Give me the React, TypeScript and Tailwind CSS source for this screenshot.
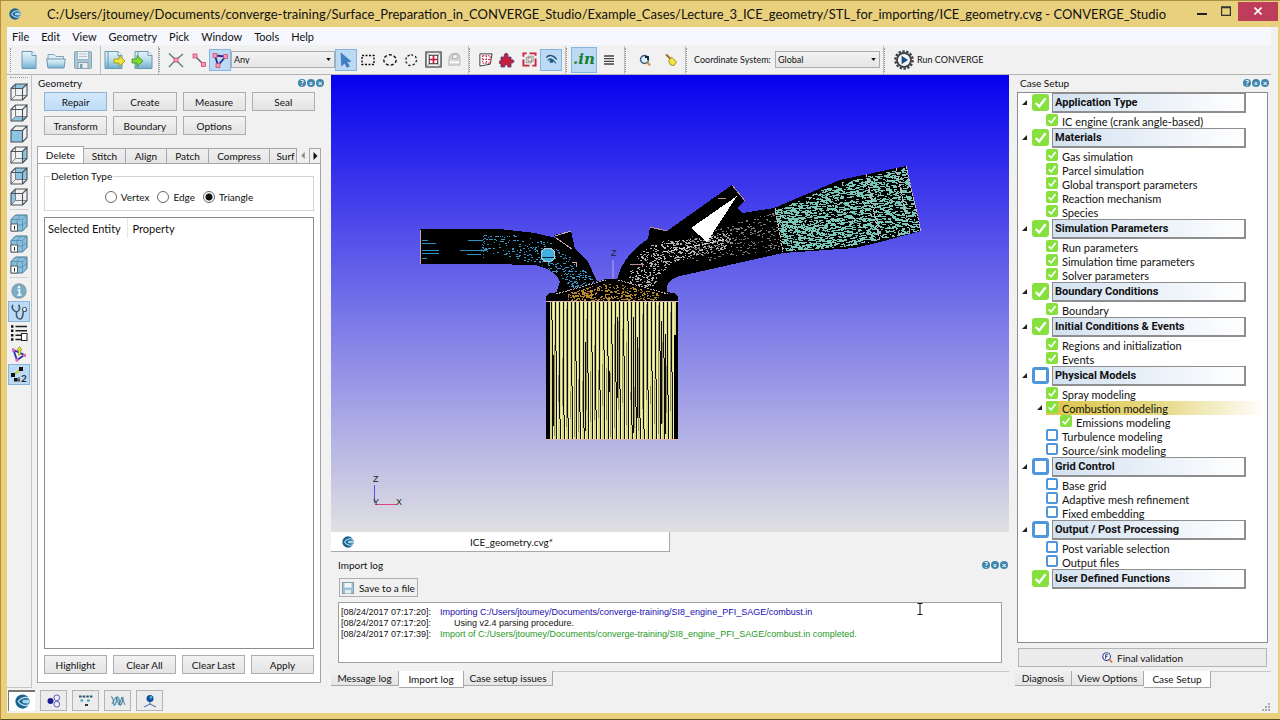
import { useId } from 'react';
import type { ReactNode } from 'react';
import { clsx } from 'clsx';

const menus = ['File', 'Edit', 'View', 'Geometry', 'Pick', 'Window', 'Tools', 'Help'];

const caseSetup = [
  { title: 'Application Type', done: true, items: [{ label: 'IC engine (crank angle-based)', done: true }] },
  {
    title: 'Materials',
    done: true,
    items: [
      { label: 'Gas simulation', done: true },
      { label: 'Parcel simulation', done: true },
      { label: 'Global transport parameters', done: true },
      { label: 'Reaction mechanism', done: true },
      { label: 'Species', done: true },
    ],
  },
  {
    title: 'Simulation Parameters',
    done: true,
    items: [
      { label: 'Run parameters', done: true },
      { label: 'Simulation time parameters', done: true },
      { label: 'Solver parameters', done: true },
    ],
  },
  { title: 'Boundary Conditions', done: true, items: [{ label: 'Boundary', done: true }] },
  {
    title: 'Initial Conditions & Events',
    done: true,
    items: [
      { label: 'Regions and initialization', done: true },
      { label: 'Events', done: true },
    ],
  },
  {
    title: 'Physical Models',
    done: false,
    items: [
      { label: 'Spray modeling', done: true },
      { label: 'Combustion modeling', done: true, selected: true },
      { label: 'Emissions modeling', done: true, nested: true },
      { label: 'Turbulence modeling', done: false },
      { label: 'Source/sink modeling', done: false },
    ],
  },
  {
    title: 'Grid Control',
    done: false,
    items: [
      { label: 'Base grid', done: false },
      { label: 'Adaptive mesh refinement', done: false },
      { label: 'Fixed embedding', done: false },
    ],
  },
  {
    title: 'Output / Post Processing',
    done: false,
    items: [
      { label: 'Post variable selection', done: false },
      { label: 'Output files', done: false },
    ],
  },
  { title: 'User Defined Functions', done: true, items: [] },
];

// ---------- small building blocks ----------

function PushButton({ children, active }: { children: ReactNode; active?: boolean }) {
  return (
    <button
      className={clsx(
        'flex h-[19px] items-center justify-center border text-[10px] leading-none',
        active
          ? 'border-[#8fb4d8] bg-linear-to-b from-[#d3e8fb] to-[#c0dcf6]'
          : 'border-[#adadad] bg-linear-to-b from-[#f2f2f2] to-[#e4e4e4]',
      )}
    >
      {children}
    </button>
  );
}

function Tab({ children, active, up, width }: { children: ReactNode; active?: boolean; up?: boolean; width: string }) {
  return (
    <button
      className={clsx(
        'shrink-0 overflow-hidden whitespace-nowrap border-[#a8a8a8] text-center text-[10px] leading-none',
        width,
        up ? 'border-r border-t' : 'border-b border-r',
        active && up && 'h-[17px] border-l bg-white',
        active && !up && 'h-[17px] bg-white',
        !active && 'h-[15px] bg-linear-to-b from-[#f0f0f0] to-[#e5e5e5]',
      )}
    >
      {children}
    </button>
  );
}

function PanelTitle({ children }: { children: ReactNode }) {
  return (
    <div className="flex h-4 items-center justify-between text-[10px] leading-none">
      <h2>{children}</h2>
      <div className="flex gap-px">
        {['?', '▫', '×'].map((mark) => (
          <button
            key={mark}
            className="flex size-2 items-center justify-center rounded-full bg-[#3f86ad] text-[8px] leading-none font-bold text-white"
          >
            {mark}
          </button>
        ))}
      </div>
    </div>
  );
}

function Status({ done, big, label }: { done: boolean; big?: boolean; label: string }) {
  return (
    <span className={clsx('grid shrink-0', big ? 'size-[17px]' : 'size-3')}>
      <input
        type="checkbox"
        aria-label={label}
        defaultChecked={done}
        className={clsx(
          'size-full appearance-none border-[#4f97dc] bg-white checked:border-[#86e03e] checked:bg-[#86e03e] [grid-area:1/1]',
          big ? 'rounded-[3px] border-3' : 'rounded-xs border-2',
        )}
      />
      {done && (
        <svg viewBox="0 0 16 16" className="pointer-events-none size-full [grid-area:1/1]">
          <path d="M3.5 8.5 L6.8 11.8 L12.8 4" fill="none" stroke="#fff" strokeWidth="2.2" />
        </svg>
      )}
    </span>
  );
}

function Expander() {
  return (
    <svg viewBox="0 0 6 6" className="size-[5px] shrink-0">
      <path d="M6 0 V6 H0 Z" fill="#222" />
    </svg>
  );
}

function Logo({ className }: { className: string }) {
  return (
    <svg viewBox="0 0 16 16" className={className}>
      <circle cx="8" cy="8" r="7.6" fill="#1d6391" />
      <path d="M14.8 4.6 C11 2.6 6 4 3.4 8 C6 12 11 13.4 14.8 11.4" fill="none" stroke="#bfe2f2" strokeWidth="1.4" />
      <path d="M15.4 6 L9 6.2 C7.4 6.6 7.4 9.4 9 9.8 L15.4 10 Z" fill="#a4d3ea" />
    </svg>
  );
}

// ---------- toolbar ----------

function Divider() {
  return <span className="h-7 w-1 shrink-0 border-r border-[#bdbdbd]" />;
}

function Grip() {
  return <span className="mr-1 h-6 w-px shrink-0 border-l border-dotted border-[#999]" />;
}

function Tool({ children, label, width, active }: { children: ReactNode; label: string; width: string; active?: boolean }) {
  return (
    <button
      aria-label={label}
      className={clsx(
        'flex h-[22px] shrink-0 items-center justify-center',
        width,
        active && 'border border-[#86b4dd] bg-[#bcdaf3]',
      )}
    >
      {children}
    </button>
  );
}

function PageShape({ x = 3 }: { x?: number }) {
  return (
    <>
      <path d={`M${x} 1.5 H${x + 10} L${x + 14} 5.5 V18.5 H${x} Z`} fill="url(#sky)" stroke="#6d98b0" />
      <path d={`M${x + 10} 1.5 V5.5 H${x + 14}`} fill="#fff" stroke="#6d98b0" />
    </>
  );
}

function SelectionTools() {
  return (
    <>
      <Tool label="Cursor" width="w-[22px]" active>
        <svg viewBox="0 0 16 16" className="size-4">
          <path d="M3 1 L13 9.5 L8.8 9.8 L11.4 14.2 L9 15.4 L6.8 11 L3.6 13.8 Z" fill="#3f80c8" stroke="#2f68ab" strokeWidth=".6" />
        </svg>
      </Tool>
      <Tool label="Rectangle" width="w-[22px]">
        <svg viewBox="0 0 16 16" className="size-4">
          <rect x="2" y="3.5" width="12" height="9" fill="none" stroke="#111" strokeWidth="1.4" strokeDasharray="2 1.5" />
        </svg>
      </Tool>
      <Tool label="Ellipse" width="w-[21px]">
        <svg viewBox="0 0 16 16" className="size-4">
          <ellipse cx="8" cy="8" rx="6.2" ry="5.2" fill="none" stroke="#111" strokeWidth="1.4" strokeDasharray="3 2" />
        </svg>
      </Tool>
      <Tool label="Lasso" width="w-[22px]">
        <svg viewBox="0 0 16 16" className="size-4">
          <path d="M8 2.5 L12.5 4.5 L14 8 L11 12.5 L6 13.5 L2.5 9.5 L3.5 4.5 Z" fill="none" stroke="#222" strokeWidth="1.3" strokeDasharray="2.4 2" />
        </svg>
      </Tool>
      <Tool label="Window select" width="w-[22px]">
        <svg viewBox="0 0 18 18" className="size-[17px]">
          <path d="M1 1 H17 V17 H1 Z" fill="none" stroke="#222" strokeWidth="1.2" />
          <path d="M1 1 L4.5 4.5 M17 1 L13.5 4.5 M1 17 L4.5 13.5 M17 17 L13.5 13.5" stroke="#888" strokeWidth=".8" />
          <rect x="4.5" y="4.5" width="9" height="9" fill="#fff" stroke="#222" />
          <path d="M9 5 V13 M5 9 H13" stroke="#d0103a" strokeWidth="1.8" />
        </svg>
      </Tool>
      <Tool label="Paint select" width="w-[21px]">
        <svg viewBox="0 0 16 16" className="size-[15px]">
          <path d="M2 14 V8 C2 4 4 2 6 1.5 H11 C13 2 14 4 14 8 V14 Z" fill="#d6d6d6" stroke="#bcbcbc" />
          <rect x="6" y="3" width="5" height="4" fill="#f4f4f4" stroke="#999" strokeWidth=".7" />
          <path d="M3 11 H13" stroke="#fff" strokeWidth="2" />
        </svg>
      </Tool>
    </>
  );
}

function Toolbar() {
  return (
    <div className="mr-[7px] flex h-[30px] items-center border-b border-[#b4b4b4] pl-[3px] text-[9px]">
      <Grip />
      <Tool label="New" width="w-[28px]">
        <svg viewBox="0 0 20 20" className="size-5">
          <defs>
            <linearGradient id="sky" x1="0" y1="0" x2="0" y2="1">
              <stop offset="0" stopColor="#e6f4fa" />
              <stop offset=".55" stopColor="#b4d9ea" />
              <stop offset="1" stopColor="#6fb0d2" />
            </linearGradient>
          </defs>
          <PageShape />
        </svg>
      </Tool>
      <Tool label="Open" width="w-[26px]">
        <svg viewBox="0 0 20 20" className="size-5">
          <path d="M2 17 V4.5 H8 L10 6.5 H17.5 V9" fill="#dfeef5" stroke="#7fa4b8" />
          <path d="M.7 9 H19.3 L18 18 H2 Z" fill="url(#sky)" stroke="#6d98b0" />
        </svg>
      </Tool>
      <Tool label="Save" width="w-[28px]">
        <svg viewBox="0 0 20 20" className="size-5">
          <rect x="1.5" y="1.5" width="17" height="17" rx="1.5" fill="#a9c7d6" stroke="#86a5b4" />
          <rect x="4.5" y="1.5" width="11" height="8" fill="#eef3f5" stroke="#9ab4c0" />
          <path d="M6 4 H14 M6 6.5 H14" stroke="#b5c3ca" />
          <rect x="5" y="12.5" width="10" height="6" fill="#e7ecef" stroke="#8aa4b1" />
          <rect x="7" y="14" width="2.5" height="4" fill="#7f9cab" />
        </svg>
      </Tool>
      <Divider />
      <Tool label="Export" width="w-[28px]">
        <svg viewBox="0 0 22 20" className="h-5 w-[22px]">
          <PageShape x={1} />
          <PageShape x={4} />
          <path d="M10 9 H15 V5.5 L21 11 L15 16.5 V13 H10 Z" fill="#f2e43a" stroke="#8f8a1c" strokeWidth=".8" />
        </svg>
      </Tool>
      <Tool label="Import" width="w-[26px]">
        <svg viewBox="0 0 22 20" className="h-5 w-[22px]">
          <PageShape x={4} />
          <PageShape x={7} />
          <path d="M1 9 H6 V5.5 L12 11 L6 16.5 V13 H1 Z" fill="#7bdc35" stroke="#3f8a1c" strokeWidth=".8" />
        </svg>
      </Tool>
      <Divider />
      <Grip />
      <Tool label="Pick vertex" width="w-[24px]">
        <svg viewBox="0 0 16 16" className="size-4">
          <path d="M1 1.5 Q7 7 15 15 M15 2 Q8 7 1 15" fill="none" stroke="#4d7f8c" strokeWidth="1.4" />
          <rect x="6" y="6" width="4" height="4" fill="#f59ab2" stroke="#d4476c" strokeWidth=".8" />
        </svg>
      </Tool>
      <Tool label="Pick edge" width="w-[21px]">
        <svg viewBox="0 0 16 16" className="size-4">
          <path d="M4 4 L13 13" stroke="#555" strokeWidth="1.2" />
          <rect x="2" y="2" width="4" height="4" fill="#f59ab2" stroke="#d4476c" strokeWidth=".8" />
          <rect x="10.5" y="10.5" width="4" height="4" fill="#f59ab2" stroke="#d4476c" strokeWidth=".8" />
        </svg>
      </Tool>
      <Tool label="Pick triangle" width="w-[22px]" active>
        <svg viewBox="0 0 16 16" className="size-4">
          <path d="M3 3.5 L13.5 4.5 L6 13.5 Z" fill="none" stroke="#1c2b9c" strokeWidth="1.8" />
          <path d="M1 1.5 h4 v4 h-4 z M11.5 2.5 h4 v4 h-4 z M4 11.5 h4 v4 h-4 z" fill="#f59ab2" stroke="#d4476c" strokeWidth=".8" />
        </svg>
      </Tool>
      <Select label="Pick filter" value="Any" width="w-[104px]" />
      <SelectionTools />
      <Divider />
      <Grip />
      <Tool label="Mesh" width="w-[22px]">
        <svg viewBox="0 0 16 16" className="size-[15px]">
          <path d="M2 15 V2 H15 L13 13 Z" fill="#fff" stroke="#333" />
          <path d="M5 4 H13 V12 H5 Z M5 8 H13 M9 4 V12" fill="none" stroke="#c2284b" strokeWidth="1.2" strokeDasharray="1.6 1.2" />
        </svg>
      </Tool>
      <Tool label="Puzzle" width="w-[22px]">
        <svg viewBox="0 0 16 16" className="size-4">
          <path d="M2 5 H5.4 C4 1 9 0 9 3 L8.6 5 H12 V8 C15 6.6 16.4 10.6 13 11 L12 10.8 V15 H8.8 C9.4 12 5.4 12 5.6 15 H2 V11.5 C-1 12 -1 8.4 2 9 Z" fill="#c41f3c" stroke="#4b3a78" strokeWidth=".8" />
        </svg>
      </Tool>
      <Tool label="Box select" width="w-[22px]">
        <svg viewBox="0 0 16 16" className="size-[15px]">
          <path d="M1.5 5 V1.5 H5 M8 1.5 H14.5 V4 M14.5 7 V14.5 H11 M8 14.5 H1.5 V8" fill="none" stroke="#cc2244" strokeWidth="2" />
          <path d="M4.5 6 H10 V11.5 H4.5 Z M6.5 4.5 H12 V10 H6.5 Z" fill="none" stroke="#8a8a8a" strokeWidth=".9" />
        </svg>
      </Tool>
      <Tool label="Visibility" width="w-[22px]" active>
        <svg viewBox="0 0 16 16" className="size-[15px]">
          <path d="M2.5 6 C5 2.5 10.5 3 13.5 8" fill="none" stroke="#1e4d78" strokeWidth="1.4" />
          <path d="M4 9 C6 6.5 9 6.5 12.5 12" fill="none" stroke="#1e4d78" strokeWidth="1.2" />
          <circle cx="8" cy="9.5" r="2.2" fill="#1e5d92" />
        </svg>
      </Tool>
      <Divider />
      <Grip />
      <button className="flex h-[26px] w-[26px] items-center justify-center border border-[#86b4dd] bg-[#bcdaf3] font-['DejaVu_Serif','Liberation_Serif',serif] text-[15px] leading-none font-bold text-[#17802a] italic">
        .in
      </button>
      <Tool label="Lines" width="w-[24px]">
        <svg viewBox="0 0 10 10" className="size-[10px]">
          <path d="M0 1 H10 M0 3.7 H10 M0 6.3 H10 M0 9 H10" stroke="#444" strokeWidth="1.3" />
        </svg>
      </Tool>
      <Divider />
      <Grip />
      <Tool label="Find" width="w-[30px]">
        <svg viewBox="0 0 12 12" className="size-3">
          <circle cx="5.5" cy="5.5" r="4" fill="#dcebf6" stroke="#3d5d80" strokeWidth="1.4" />
          <path d="M6 3 H9 V6" fill="none" stroke="#0d2740" strokeWidth="1.8" />
          <path d="M8.5 8.5 L11 11.5" stroke="#e08a3a" strokeWidth="2" />
        </svg>
      </Tool>
      <Tool label="Sweep" width="w-[22px]">
        <svg viewBox="0 0 12 12" className="size-3">
          <path d="M1 .5 L5.5 4.8" stroke="#a56c1c" strokeWidth="2" />
          <path d="M3.5 6.5 L7 3.5 L11.5 8 L9 11.5 L5.5 11 Z" fill="#f5e53c" stroke="#8d7a16" strokeWidth=".8" />
        </svg>
      </Tool>
      <Divider />
      <Grip />
      <label htmlFor="coords" className="w-[84px] pl-[3px] whitespace-nowrap">
        Coordinate System:
      </label>
      <Select id="coords" label="Coordinate System" value="Global" width="w-[105px]" />
      <Divider />
      <Grip />
      <button className="ml-[5px] flex items-center gap-[3px]">
        <svg viewBox="0 0 20 20" className="size-5">
          <circle cx="10" cy="10" r="8.6" fill="none" stroke="#3f4347" strokeWidth="2.4" strokeDasharray="2.4 1.46" />
          <circle cx="10" cy="10" r="7" fill="#f4f6f8" stroke="#3f4347" strokeWidth="1.8" />
          <path d="M7.6 5.8 L14 10 L7.6 14.2 Z" fill="#1c4f8a" />
        </svg>
        Run CONVERGE
      </button>
    </div>
  );
}

function Select({ id, label, value, width }: { id?: string; label: string; value: string; width: string }) {
  return (
    <span className={clsx('grid h-[17px] shrink-0 items-center', width)}>
      <select
        id={id}
        aria-label={label}
        className="size-full appearance-none border border-[#adadad] bg-linear-to-b from-[#f2f2f2] to-[#e6e6e6] pl-[2px] leading-none [grid-area:1/1]"
      >
        <option>{value}</option>
      </select>
      <svg viewBox="0 0 6 4" className="pointer-events-none mr-1 h-[3px] w-[5px] justify-self-end [grid-area:1/1]">
        <path d="M0 0 H6 L3 4 Z" fill="#111" />
      </svg>
    </span>
  );
}

// ---------- left icon strip ----------

const faces: Record<string, string> = {
  top: 'M1 5.5 L5.5 1 H17 L12.5 5.5 Z',
  bottom: 'M1 17 L5.5 12.5 H17 L12.5 17 Z',
  front: 'M1 5.5 H12.5 V17 H1 Z',
  right: 'M12.5 5.5 L17 1 V12.5 L12.5 17 Z',
  back: 'M5.5 1 H17 V12.5 H5.5 Z',
  left: 'M1 5.5 L5.5 1 V12.5 L1 17 Z',
};

function Cube({ face }: { face: string }) {
  return (
    <svg viewBox="0 0 18 18" className="size-[18px]">
      <path d={faces[face]} fill="#8cc4e2" />
      {face !== 'front' && <path d="M5.5 1 V12.5 H17 M5.5 12.5 L1 17" fill="none" stroke="#6c747c" strokeWidth=".9" />}
      <path d="M1 5.5 H12.5 V17 H1 Z M1 5.5 L5.5 1 H17 L12.5 5.5 M17 1 V12.5 L12.5 17" fill="none" stroke="#4c5259" strokeWidth="1.1" />
    </svg>
  );
}

function SolidCube() {
  return (
    <svg viewBox="0 0 18 18" className="size-[18px]">
      <path d="M1 5.5 L5.5 1 H17 V12.5 L12.5 17 H1 Z" fill="#86c0de" stroke="#42728c" />
      <path d="M1 5.5 H12.5 V17 M12.5 5.5 L17 1 M7 5.5 V17 M1 11 H12.5 L17 7 M7 5.5 L11 1" fill="none" stroke="#5a8ba5" strokeWidth=".8" />
      <rect x="1" y="10" width="6.5" height="7" fill="#fff" stroke="#444" strokeWidth=".8" />
      <path d="M4.5 12 V15.5" stroke="#222" />
    </svg>
  );
}

function IconStrip() {
  return (
    <aside className="flex w-[25px] shrink-0 flex-col items-center border-r border-b border-[#c4c4c4] pt-[2px]">
      <span className="mb-[3px] w-[18px] border-t border-dotted border-[#999]" />
      {Object.keys(faces).map((face) => (
        <Strip key={face} label={face}>
          <Cube face={face} />
        </Strip>
      ))}
      <span className="my-[2px] w-[18px] border-t border-[#d0d0d0]" />
      {['view 1', 'view 2', 'view 3'].map((view) => (
        <Strip key={view} label={view}>
          <SolidCube />
        </Strip>
      ))}
      <span className="my-[2px] w-[18px] border-t border-[#d0d0d0]" />
      <Strip label="Information">
        <svg viewBox="0 0 16 16" className="size-4">
          <circle cx="8" cy="8" r="7" fill="#76afcb" stroke="#8d9fa8" strokeWidth="1.4" />
          <path d="M6.5 7 H8.5 V12 M6.3 12 H10.5" fill="none" stroke="#fff" strokeWidth="1.6" />
          <circle cx="8" cy="4.2" r="1.2" fill="#fff" />
        </svg>
      </Strip>
      <Strip label="Diagnosis" active>
        <svg viewBox="0 0 18 18" className="size-[18px]">
          <path d="M3 2 C1 4 3 8 6.5 9 C10 8 10 4 8.6 1.6 M6.5 9 C6 13 7 16 10 16 C14 16 12 10 14 8" fill="none" stroke="#44596e" strokeWidth="1.6" />
          <circle cx="14.5" cy="6.5" r="2" fill="#fff" stroke="#44596e" strokeWidth="1.2" />
        </svg>
      </Strip>
      <Strip label="List">
        <svg viewBox="0 0 18 18" className="size-[18px]">
          <path d="M1 2.5 H4 M1 6.8 H4 M1 11.2 H4 M1 15.5 H4" stroke="#111" strokeWidth="2.6" strokeDasharray="2.4 1" />
          <path d="M5.5 2.5 H17 M5.5 6.8 H17 M5.5 11.2 H11 M5.5 15.5 H11" stroke="#222" strokeWidth="1.4" />
          <rect x="11.5" y="9.5" width="5.5" height="7" fill="#fff" stroke="#222" />
        </svg>
      </Strip>
      <Strip label="Normals">
        <svg viewBox="0 0 16 16" className="size-4">
          <path d="M2.5 4 L13.5 9 L6 14 Z" fill="none" stroke="#2430b0" strokeWidth="1.8" />
          <path d="M7.5 9 V4 H6 L8.5 .5 L11 4 H9.5 V9 Z" fill="#f2e43a" stroke="#8f8a1c" strokeWidth=".7" />
          <path d="M1 2.5 h3 v3 h-3 z M12 8 h3 v3 h-3 z M4.5 12.5 h3 v3 h-3 z" fill="#e36ab0" />
        </svg>
      </Strip>
      <Strip label="Vertex ids" active>
        <svg viewBox="0 0 18 18" className="size-[18px]">
          <path d="M3 9 L11 3" stroke="#c9c726" strokeWidth="2" />
          <path d="M1 7 h4 v4 h-4 z M9 1 h4 v4 h-4 z M4 12 h3.5 v3.5 h-3.5 z" fill="#111" />
          <path d="M7 14 H10 M9 11 V16" stroke="#333" />
          <text x="11" y="16" fontSize="10" fontWeight="700" fill="#1d2c3c">
            2
          </text>
        </svg>
      </Strip>
    </aside>
  );
}

function Strip({ children, label, active }: { children: ReactNode; label: string; active?: boolean }) {
  return (
    <button
      aria-label={label}
      className={clsx(
        'flex h-[21px] w-[22px] shrink-0 items-center justify-center',
        active && 'border border-[#86b4dd] bg-[#bcdaf3]',
      )}
    >
      {children}
    </button>
  );
}

// ---------- geometry panel ----------

function GeometryPanel() {
  return (
    <section className="flex w-[287px] shrink-0 flex-col pb-[5px]">
      <div className="pl-px">
        <PanelTitle>Geometry</PanelTitle>
      </div>
      <div className="mt-px grid grid-cols-4 gap-x-[6px] gap-y-[5px] pr-[9px] pl-[7px]">
        <PushButton active>Repair</PushButton>
        <PushButton>Create</PushButton>
        <PushButton>Measure</PushButton>
        <PushButton>Seal</PushButton>
        <PushButton>Transform</PushButton>
        <PushButton>Boundary</PushButton>
        <PushButton>Options</PushButton>
      </div>
      <div className="mt-[11px] mr-[3px] flex items-end">
        <Tab up active width="w-[47px]">Delete</Tab>
        <Tab up width="w-[42px]">Stitch</Tab>
        <Tab up width="w-[41px]">Align</Tab>
        <Tab up width="w-[42px]">Patch</Tab>
        <Tab up width="w-[61px]">Compress</Tab>
        <Tab up width="w-[27px]">&nbsp;&nbsp;Surf</Tab>
        <button aria-label="Scroll tabs left" className="flex h-[15px] w-3 items-center justify-center bg-[#f0f0f0]">
          <svg viewBox="0 0 4 8" className="h-[7px] w-1">
            <path d="M4 0 V8 L0 4 Z" fill="#888" />
          </svg>
        </button>
        <button aria-label="Scroll tabs right" className="flex h-[15px] w-3 items-center justify-center border border-b-0 border-[#a8a8a8] bg-[#f0f0f0]">
          <svg viewBox="0 0 4 8" className="h-2 w-[5px]">
            <path d="M0 0 V8 L4 4 Z" fill="#111" />
          </svg>
        </button>
      </div>
      <div className="mr-[3px] flex flex-1 flex-col border border-[#a4a4a4] bg-white px-[6px] pt-[7px] pb-2">
        <fieldset className="flex h-10 items-start justify-center gap-2 border border-[#d4d4d4] pt-[10px] text-[10px] leading-none">
          <legend className="ml-[5px] px-px">Deletion Type</legend>
          {['Vertex', 'Edge', 'Triangle'].map((kind) => (
            <label key={kind} className="flex items-center gap-1">
              <input
                type="radio"
                name="deletion"
                defaultChecked={kind === 'Triangle'}
                className="size-3 appearance-none rounded-full border border-[#666] bg-white checked:bg-[radial-gradient(circle,#111_3px,transparent_4px)]"
              />
              {kind}
            </label>
          ))}
        </fieldset>
        <div className="mt-[6px] flex-1 border border-[#8c8c8c]">
          <table className="w-full table-fixed text-left text-[11px] leading-none">
            <thead>
              <tr className="h-[20px]">
                <th className="w-[82px] border-r border-[#e8e8e8] pl-[3px] font-normal whitespace-nowrap">Selected Entity</th>
                <th className="pl-[5px] font-normal">Property</th>
              </tr>
            </thead>
          </table>
        </div>
        <div className="mt-[6px] grid grid-cols-4 gap-[6px]">
          <PushButton>Highlight</PushButton>
          <PushButton>Clear All</PushButton>
          <PushButton>Clear Last</PushButton>
          <PushButton>Apply</PushButton>
        </div>
      </div>
    </section>
  );
}

// ---------- 3D viewport ----------

// small deterministic generator, so the mesh looks the same on every load
function makeRandom(seed: number) {
  let s = seed;
  return () => {
    s = (s * 16807) % 2147483647;
    return s / 2147483647;
  };
}

// dashes scattered along a centre line, given as [x, y, half width] stations
function scatter(seed: number, count: number, line: number[][], dash: number) {
  const rnd = makeRandom(seed);
  let d = '';
  for (let i = 0; i < count; i++) {
    const t = rnd() * (line.length - 1);
    const k = Math.floor(t);
    const f = t - k;
    const [x0, y0, w0] = line[k];
    const [x1, y1, w1] = line[k + 1];
    const dx = x1 - x0;
    const dy = y1 - y0;
    const len = Math.hypot(dx, dy);
    const off = (rnd() * 2 - 1) * (w0 + (w1 - w0) * f);
    const x = Math.round(x0 + dx * f - (dy / len) * off);
    const y = Math.round(y0 + dy * f + (dx / len) * off);
    d += `M${x} ${y}.5h${1 + Math.floor(rnd() * dash)}`;
  }
  return d;
}

function cylinderLines() {
  const rnd = makeRandom(91);
  let dark = '';
  let olive = '';
  let light = '';
  for (let x = 551; x < 674; x += 4) {
    const split = Math.round(320 + rnd() * 110);
    dark += `M${x}.5 302V${split}M${x + 1}.5 ${split}V439`;
    if (rnd() > 0.8) dark += `M${x + 2}.5 ${Math.round(302 + rnd() * 70)}V${Math.round(390 + rnd() * 49)}`;
    olive += `M${x + 3}.5 ${Math.round(302 + rnd() * 90)}V${Math.round(400 + rnd() * 39)}`;
    light += `M${x + 2}.5 302V439`;
  }
  return { dark, olive, light };
}

const cylinder = cylinderLines();
const leftBlue = scatter(7, 330, [[482, 242, 8], [520, 247, 12], [548, 255, 12], [572, 272, 11], [584, 288, 12]], 2);
const rightWhite = scatter(21, 520, [[640, 290, 12], [645, 268, 15], [662, 253, 13], [690, 248, 9], [730, 240, 8]], 2);
const rightGrey = scatter(33, 300, [[690, 250, 13], [740, 238, 16], [779, 230, 19]], 2);
const outletTeal = scatter(45, 2300, [[779, 231, 21], [845, 214, 32], [912, 199, 32]], 4);
const headGold = scatter(57, 340, [[568, 297, 4], [608, 291, 9], [658, 297, 4]], 2);

function EngineView() {
  const id = useId();
  return (
    <svg viewBox="331 75 678 457" preserveAspectRatio="xMidYMid meet" className="size-full" shapeRendering="crispEdges">
      <title>Engine geometry</title>
      <clipPath id={id}>
        <path d="M774 208 L840 180 L906 166 L921 231 L880 242 L855 248 L783 253 Z" />
      </clipPath>
      {/* intake */}
      <path d="M420 229 H500 L535 233 L556 238 L554 235 L571 231 L575 249 L588 262 L597 281 L560 296 L557 291 L560 282 Q556 270 535 265 L488 264 H420 Z" />
      <path d="M422 240h6M422 243h14M422 250h17M422 253h17M422 258h5M468 240h15M460 250h27M467 254h14" stroke="#2f8fc0" />
      <path d={leftBlue} stroke="#3796c4" />
      <path d="M483.500 236V260" stroke="#2f8fc0" strokeDasharray="1 2" />
      <circle cx="548" cy="255" r="7" fill="#41aee0" stroke="#b9c9d0" />
      <path d="M542 257H554" stroke="#123" />
      <path d="M420.500 230V264M555 236L571 231M556 238L572 249M572 262h4v5" fill="none" stroke="#c9a9ae" />
      {/* exhaust */}
      <path d="M617 280 Q622 256 648 239 L650 227 L667 231 L732 185 L745 201 L737 208 L743 213 L774 208 L840 180 L906 166 L921 231 L880 242 L855 248 L783 253 L680 276 Q664 280 667 295 Z" />
      <path d={rightWhite} stroke="#b4b4b4" />
      <path d={rightGrey} stroke="#7a7a7a" />
      <path d="M663 252 L695 246 L727 239" fill="none" stroke="#d8d8d8" strokeDasharray="6 2" />
      <g clipPath={`url(#${id})`}>
        <path d={outletTeal} stroke="#79c9bb" />
      </g>
      <path d="M737 196 L691 228 L707 242 Z" fill="#fff" />
      <path d="M775 208L783 252M866 174L880 241M896 168L910 233M906 166L921 231" stroke="#d9b8bd" strokeDasharray="3 1" />
      <path d="M650 227L667 231M732 185L745 201M718 198h8M630 264h12v3" fill="none" stroke="#b89096" />
      {/* cylinder head */}
      <path d="M546 302 V297 L549 293 L560 292 L606 279 H618 L664 292 L675 293 L678 297 V302 Z" />
      <path d={headGold} stroke="#b8892a" />
      <path d="M556 294L606 280M618 280L668 294" stroke="#c9a9ae" strokeDasharray="2 1" />
      {/* cylinder */}
      <rect x="546" y="301" width="132" height="139" fill="#d6d78d" />
      <path d={cylinder.light} stroke="#f6f8a4" />
      <path d={cylinder.olive} stroke="#8f9068" />
      <path d={cylinder.dark} stroke="#0c0c08" />
      <path d="M546 301 h4 v139 h-4 z M674 335 h4 v105 h-4 z M676 301 h2 v40 h-2 z" />
      <path d="M546 301.500H678M546 439.500H678" stroke="#dfb6bd" />
      {/* axes */}
      <path d="M612.500 260V279" stroke="#8f84e6" strokeWidth="2" />
      <path d="M374.500 485V503" stroke="#5b4be0" />
      <path d="M375 504.500H397" stroke="#e0457a" />
      <g fontSize="9" fill="#222" fontFamily="Liberation Sans, sans-serif">
        <text x="611" y="256">Z</text>
        <text x="373" y="482">Z</text>
        <text x="373" y="505">Y</text>
        <text x="396" y="505">X</text>
      </g>
    </svg>
  );
}

// ---------- log ----------

const logLines = [
  {
    time: '[08/24/2017 07:17:20]:',
    text: 'Importing C:/Users/jtoumey/Documents/converge-training/SI8_engine_PFI_SAGE/combust.in',
    color: 'text-[#1a0ab0]',
  },
  { time: '[08/24/2017 07:17:20]:', text: 'Using v2.4 parsing procedure.', color: 'pl-[14px]' },
  {
    time: '[08/24/2017 07:17:39]:',
    text: 'Import of C:/Users/jtoumey/Documents/converge-training/SI8_engine_PFI_SAGE/combust.in completed.',
    color: 'text-[#1f9a1f]',
  },
];

function LogPanel() {
  return (
    <section className="flex flex-col">
      <div className="pt-[5px] pr-px pl-[7px]">
        <PanelTitle>Import log</PanelTitle>
      </div>
      <div className="px-[7px]">
        <button className="mt-[5px] ml-px flex h-[19px] items-center gap-[5px] border border-[#adadad] bg-[#f0f0f0] px-[2px] text-[10px] leading-none">
          <svg viewBox="0 0 12 12" className="size-3">
            <rect x=".5" y=".5" width="11" height="11" fill="#9cc3d6" stroke="#7b9dad" />
            <rect x="2.500" y="1" width="7" height="4.500" fill="#f2f6f8" />
            <rect x="3" y="8" width="6" height="3.500" fill="#e7ecef" />
          </svg>
          Save to a file
        </button>
        <div className="relative mt-[5px] h-[61px] border border-[#a0a0a0] bg-white px-[2px] pt-1 font-['Liberation_Sans',sans-serif] text-[9px] leading-[11px]">
          {logLines.map((line) => (
            <p key={line.text} className="flex">
              <span className="w-[99px] shrink-0">{line.time}</span>
              <span className={line.color}>{line.text}</span>
            </p>
          ))}
          <svg viewBox="0 0 6 12" className="absolute top-0 right-[78px] h-3 w-[6px]">
            <path d="M.5 .5 H5.500 M3 .5 V11.500 M.5 11.500 H5.500" stroke="#111" />
          </svg>
        </div>
      </div>
      <div className="mt-2 flex h-[17px] items-start">
        <Tab width="w-[68px]">Message log</Tab>
        <Tab width="w-[65px]" active>Import log</Tab>
        <Tab width="w-[89px]">Case setup issues</Tab>
        <span className="flex-1 border-t border-[#c8c8c8]" />
      </div>
    </section>
  );
}

// ---------- case setup ----------

function CaseSetup() {
  return (
    <section className="flex w-[257px] shrink-0 flex-col">
      <div className="pr-[2px] pl-[6px]">
        <PanelTitle>Case Setup</PanelTitle>
      </div>
      <div className="mx-[3px] mt-px flex-1 border border-[#8c8c8c] bg-white pl-1">
        {caseSetup.map((group) => (
          <div key={group.title}>
            {/* relative, so that the bar covers descenders of the row above */}
            <div className="relative flex h-[21px] items-start">
              <span className="w-[10px] pt-[7px]">{group.items.length > 0 && <Expander />}</span>
              <span className="pt-px">
                <Status done={group.done} big label={group.title} />
              </span>
              <h3 className="ml-[3px] flex h-5 w-[194px] items-center border border-r-2 border-b-2 border-[#8e8e8e] bg-linear-to-r from-[#d3e1f0] to-white pl-[2px] font-[Roboto,sans-serif] text-[11px] leading-none font-bold">
                {group.title}
              </h3>
            </div>
            {group.items.map((item) => (
              <div key={item.label} className="flex h-[14px] items-start">
                <span className={clsx('flex shrink-0 justify-end pt-1 pr-1', item.nested ? 'w-[38px]' : 'w-6')}>
                  {item.selected && <Expander />}
                </span>
                <span
                  className={clsx(
                    'flex h-[14px] flex-1 items-start gap-1',
                    item.selected && 'bg-linear-to-r from-[#dcc54a] via-[#e6d880] to-white',
                  )}
                >
                  <Status done={item.done} label={item.label} />
                  <span className="text-[11px] leading-4 whitespace-nowrap">{item.label}</span>
                </span>
              </div>
            ))}
          </div>
        ))}
      </div>
      <button className="mt-[5px] mr-1 ml-1 flex h-[19px] items-center justify-center gap-1 border border-[#b4b4b4] bg-[#ebebeb] text-[10px] leading-none">
        <svg viewBox="0 0 12 12" className="size-[11px]">
          <circle cx="5" cy="5" r="4.200" fill="#fff" stroke="#3b4f9a" strokeWidth="1.300" />
          <path d="M4 7.500 V3 H6.500 M4 5 H6" fill="none" stroke="#23306f" />
          <path d="M8 8 L11 11.500" stroke="#d9763a" strokeWidth="1.800" />
        </svg>
        Final validation
      </button>
      <div className="mt-1 flex h-[17px] items-start pl-px">
        <Tab width="w-[57px]">Diagnosis</Tab>
        <Tab width="w-[72px]">View Options</Tab>
        <Tab width="w-[67px]" active>Case Setup</Tab>
        <span className="flex-1 border-t border-[#c8c8c8]" />
      </div>
    </section>
  );
}

// ---------- bottom module switcher ----------

function ModuleBar() {
  const box = 'flex h-[21px] w-[27px] items-center justify-center border border-[#b4b4b4] bg-[#ececec]';
  return (
    <footer className="flex h-[25px] items-center justify-between pl-px">
      <div className="flex gap-[5px]">
        <button aria-label="Studio" className="flex h-[21px] w-[27px] items-center justify-center border-t-2 border-l border-[#777] bg-white">
          <Logo className="size-[15px]" />
        </button>
        <button aria-label="Chemistry" className={box}>
          <svg viewBox="0 0 14 14" className="size-[14px]">
            <circle cx="3.500" cy="7" r="3" fill="#1b1f8c" />
            <circle cx="9.800" cy="3.800" r="2.900" fill="#eef" stroke="#5960b8" />
            <circle cx="9.800" cy="10.200" r="2.900" fill="#eef" stroke="#5960b8" />
          </svg>
        </button>
        <button aria-label="Tables" className={box}>
          <svg viewBox="0 0 16 14" className="h-[14px] w-4">
            <path d="M1 2.500 H15" stroke="#2a5a75" strokeWidth="1.800" strokeDasharray="2.600 1" />
            <path d="M2.500 6.500 H13" stroke="#2aa0b8" strokeWidth="1.800" strokeDasharray="2.600 4" />
            <path d="M7 11 H10" stroke="#333" strokeWidth="2" />
          </svg>
        </button>
        <button aria-label="Plots" className={box}>
          <svg viewBox="0 0 16 14" className="h-[14px] w-4">
            <path d="M1 3 Q3 2 4 11 Q6 12 7 3 Q9 2 10 11 Q12 12 13 3" fill="none" stroke="#2f97bd" strokeWidth="1.200" />
            <path d="M2 10 L6 3 L9 11 L12 3 L15 11" fill="none" stroke="#5a6f7c" strokeWidth=".9" />
          </svg>
        </button>
        <button aria-label="Post" className={box}>
          <svg viewBox="0 0 14 14" className="size-[14px]">
            <path d="M7 6 V10 L1 13 M7 10 L13 13" fill="none" stroke="#3f6a9c" />
            <circle cx="7" cy="4.500" r="3.500" fill="#124a9c" />
            <circle cx="8" cy="3.500" r="1.400" fill="#36b5d8" />
          </svg>
        </button>
      </div>
      <svg viewBox="0 0 8 8" className="mt-3 mr-2 size-2">
        <path d="M6 0h2v2h-2zM3 3h2v2h-2zM6 3h2v2h-2zM0 6h2v2h-2zM3 6h2v2h-2zM6 6h2v2h-2z" fill="#aaa" />
      </svg>
    </footer>
  );
}

export default function App() {
  return (
    <div className="flex min-h-screen w-full flex-col border-t border-b border-l border-t-[#a88f45] border-b-[#5c4d1e] border-l-[#c08c35] bg-[#e8d07d] pr-[2px] pb-[6px] pl-[6px] font-[Lato,'Noto_Sans',sans-serif] text-[#111]">
      <header className="flex h-[26px] items-start justify-between">
        <div className="flex h-[26px] items-center">
          <Logo className="mr-[26px] ml-[2px] size-3" />
          <h1 className="text-[13px] leading-none whitespace-nowrap">
            C:/Users/jtoumey/Documents/converge-training/Surface_Preparation_in_CONVERGE_Studio/Example_Cases/Lecture_3_ICE_geometry/STL_for_importing/ICE_geometry.cvg - CONVERGE_Studio
          </h1>
        </div>
        <div className="flex shrink-0 items-center">
          <button aria-label="Minimize" className="flex h-5 w-6 items-center justify-center">
            <svg viewBox="0 0 10 10" className="size-[10px]">
              <path d="M0 8 H10" stroke="#222" strokeWidth="2" />
            </svg>
          </button>
          <button aria-label="Maximize" className="flex h-5 w-6 items-center justify-center">
            <svg viewBox="0 0 10 10" className="size-[10px]">
              <path d="M.5 1 H9.500 V9.500 H.5 Z M0 1.500 H10" fill="none" stroke="#333" strokeWidth="1.400" />
            </svg>
          </button>
          <button aria-label="Close" className="flex h-[19px] w-10 items-center justify-center bg-[#bd3d5a]">
            <svg viewBox="0 0 8 8" className="size-2">
              <path d="M.5 .5 L7.500 7.500 M7.500 .5 L.5 7.500" stroke="#fff" strokeWidth="1.600" />
            </svg>
          </button>
        </div>
      </header>

      <div className="flex flex-1 flex-col bg-[#f1f1f1]">
        <nav className="mr-[7px] flex h-[18px] items-center gap-[12px] bg-[#f6f8fd] pl-[5px] text-[11px] leading-none">
          {menus.map((menu) => (
            <button key={menu}>{menu}</button>
          ))}
        </nav>
        <Toolbar />
        <div className="flex flex-1">
          <IconStrip />
          <span className="w-[5px] shrink-0" />
          <GeometryPanel />
          <span className="w-[7px] shrink-0" />
          <main className="flex min-w-0 flex-1 flex-col">
            <div className="min-h-[456px] flex-1 bg-linear-to-b/srgb from-[#0600ee] to-[#e0e0e2]">
              <EngineView />
            </div>
            <div className="flex h-5 w-1/2 items-center border-r border-b border-[#a8a8a8] bg-white text-[10px] leading-none">
              <Logo className="ml-[11px] size-3" />
              <span className="flex-1 text-center">ICE_geometry.cvg*</span>
            </div>
            <LogPanel />
          </main>
          <span className="w-[5px] shrink-0" />
          <CaseSetup />
          <span className="w-[7px] shrink-0" />
        </div>
        <ModuleBar />
      </div>
    </div>
  );
}
